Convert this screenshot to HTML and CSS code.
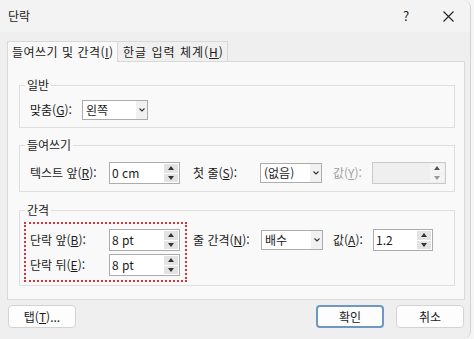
FILE: index.html
```html
<!DOCTYPE html>
<html lang="ko">
<head>
  <meta charset="UTF-8">
  <title>단락</title>
  <link rel="stylesheet" href="styles.css">
</head>
<body>
  <div class="dialog">
    <div class="titlebar">
      <span class="title">단락</span>
      <span class="help">?</span>
      <span class="close">
        <svg width="11" height="11" viewBox="0 0 11 11"><path d="M0.5 0.5 L10.5 10.5 M10.5 0.5 L0.5 10.5" stroke="#222" stroke-width="1.1" fill="none"/></svg>
      </span>
    </div>

    <div class="tabs">
      <div class="tab active">들여쓰기 및 간격(<u>I</u>)</div>
      <div class="tab">한글 입력 체계(<u>H</u>)</div>
    </div>

    <div class="panel">
      <!-- 일반 -->
      <fieldset class="group group-general">
        <legend>일반</legend>
        <div class="row">
          <span class="lbl w52">맞춤(<u>G</u>):</span>
          <div class="select w66"><span class="val">왼쪽</span><span class="chev"><svg width="6" height="4" viewBox="0 0 6 4"><path d="M0.5 0.5 L3 3 L5.5 0.5" stroke="#333" stroke-width="1.1" fill="none"/></svg></span></div>
        </div>
      </fieldset>

      <!-- 들여쓰기 -->
      <fieldset class="group group-indent">
        <legend>들여쓰기</legend>
        <div class="row">
          <span class="lbl w79">텍스트 앞(<u>R</u>):</span>
          <div class="spin w71"><span class="val">0 cm</span><span class="btns"><i class="up"></i><i class="down"></i></span></div>
          <span class="lbl w67 gap13">첫 줄(<u>S</u>):</span>
          <div class="select w62"><span class="val">(없음)</span><span class="chev"><svg width="6" height="4" viewBox="0 0 6 4"><path d="M0.5 0.5 L3 3 L5.5 0.5" stroke="#333" stroke-width="1.1" fill="none"/></svg></span></div>
          <span class="lbl w39 gap11 disabled">값(<u>Y</u>):</span>
          <div class="spin w74 disabled"><span class="val"></span><span class="btns"><i class="up"></i><i class="down"></i></span></div>
        </div>
      </fieldset>

      <!-- 간격 -->
      <fieldset class="group group-spacing">
        <legend>간격</legend>
        <div class="spacing">
          <div class="highlight">
            <div class="row">
              <span class="lbl w79">단락 앞(<u>B</u>):</span>
              <div class="spin w71"><span class="val">8 pt</span><span class="btns"><i class="up"></i><i class="down"></i></span></div>
            </div>
            <div class="row">
              <span class="lbl w79">단락 뒤(<u>E</u>):</span>
              <div class="spin w71"><span class="val">8 pt</span><span class="btns"><i class="up"></i><i class="down"></i></span></div>
            </div>
          </div>
          <div class="row line-spacing">
            <span class="lbl w68">줄 간격(<u>N</u>):</span>
            <div class="select w62"><span class="val">배수</span><span class="chev"><svg width="6" height="4" viewBox="0 0 6 4"><path d="M0.5 0.5 L3 3 L5.5 0.5" stroke="#333" stroke-width="1.1" fill="none"/></svg></span></div>
            <span class="lbl w40 gap10">값(<u>A</u>):</span>
            <div class="spin w60"><span class="val">1.2</span><span class="btns"><i class="up"></i><i class="down"></i></span></div>
          </div>
        </div>
      </fieldset>
    </div>

    <div class="footer">
      <button class="btn">탭(<u>T</u>)...</button>
      <span class="spacer"></span>
      <button class="btn default">확인</button>
      <button class="btn">취소</button>
    </div>
  </div>
</body>
</html>
```

FILE: styles.css
```css
body {
  margin: 0;
  background: #f6f6f6;
  font-family: "Noto Sans CJK KR", "Liberation Sans", sans-serif;
  font-size: 12px;
  line-height: 16px;
  color: #1b1b1b;
}
.dialog {
  width: 471px;
  height: 339px;
  box-sizing: border-box;
  background: #efefef;
  border-right: 1px solid #d2d2d2;
  border-radius: 0 8px 8px 0;
  overflow: hidden;
}
.titlebar {
  height: 32px;
  display: flex;
  align-items: center;
  padding-left: 8px;
  background: #f3f3f3;
}
.title {
  flex: 1;
}
.help {
  width: 40px;
  text-align: center;
  font-size: 13px;
}
.close {
  width: 44px;
  display: flex;
  justify-content: center;
}
.tabs {
  display: flex;
  padding: 9px 0 0 7px;
  margin-bottom: -1px;
}
.tab {
  width: 111px;
  box-sizing: border-box;
  height: 20px;
  line-height: 20px;
  padding: 0 0 0 4px;
  border: 1px solid #d9d9d9;
  border-bottom: none;
  background: #f0f0f0;
  margin-left: -1px;
  letter-spacing: 0.5px;
  white-space: nowrap;
}
.tab:first-child {
  margin-left: 0;
}
.tab + .tab {
  padding-left: 5px;
  letter-spacing: 1px;
}
.tab.active {
  position: relative;
  height: 21px;
  background: #f9f9f9;
  z-index: 1;
}
.panel {
  margin-left: 7px;
  width: 458px;
  height: 239px;
  box-sizing: border-box;
  background: #f9f9f9;
  border: 1px solid #d9d9d9;
  padding: 15px 9px 0 11px;
}
.group {
  margin: 0;
  padding: 0 8px 7px 4px;
  border: 1px solid #dfdfdf;
}
.group legend {
  padding: 0 2px;
  margin-left: 1px;
  line-height: 16px;
}
.group-general {
  padding-top: 6px;
  padding-bottom: 6px;
}
.group-indent {
  margin-top: 9px;
  padding-top: 9px;
  padding-bottom: 7px;
}
.group-spacing {
  margin-top: 10px;
  padding-top: 2px;
  padding-bottom: 3px;
}
.row {
  display: flex;
  align-items: center;
  height: 22px;
  padding-left: 6px;
}
.lbl {
  flex: none;
  white-space: nowrap;
}
.lbl.disabled {
  color: #a2a2a2;
}
.w39 { width: 39px; }
.w40 { width: 40px; }
.w52 { width: 52px; }
.w60 { width: 60px; }
.w62 { width: 62px; }
.w66 { width: 66px; }
.w67 { width: 67px; }
.w68 { width: 68px; }
.w71 { width: 71px; }
.w74 { width: 74px; }
.w79 { width: 79px; }
.gap10 { margin-left: 10px; }
.gap11 { margin-left: 11px; }
.gap13 { margin-left: 13px; }

.select {
  flex: none;
  display: flex;
  height: 20px;
  box-sizing: border-box;
  border: 1px solid #acacac;
  background: #fff;
}
.select .val {
  flex: 1;
  padding-left: 3px;
  line-height: 18px;
}
.select .chev {
  width: 11px;
  background: #f1f1f1;
  display: flex;
  align-items: center;
  justify-content: center;
}
.spin {
  flex: none;
  display: flex;
  height: 22px;
  box-sizing: border-box;
  border: 1px solid #acacac;
  background: #fff;
}
.spin .val {
  flex: 1;
  padding-left: 2px;
  line-height: 20px;
}
.spin .btns {
  width: 14px;
  padding: 1px;
  display: flex;
  flex-direction: column;
  gap: 1px;
}
.spin .btns i {
  flex: 1;
  background: #e3e3e3;
  display: flex;
  align-items: center;
  justify-content: center;
}
.spin .btns i::after {
  content: "";
  border-left: 3px solid transparent;
  border-right: 3px solid transparent;
}
.spin .up::after {
  border-bottom: 4px solid #333;
}
.spin .down::after {
  border-top: 4px solid #333;
}
.spin.disabled {
  background: #efefef;
  border-color: #cacaca;
}
.spin.disabled .btns i {
  background: #f4f4f4;
}
.spin.disabled .up::after {
  border-bottom-color: #555;
}
.spin.disabled .down::after {
  border-top-color: #999;
}

.spacing {
  display: flex;
  align-items: flex-start;
}
.highlight {
  margin-top: 2px;
  padding: 5px 5px 4px 0;
  border: 2px dotted #d8333b;
  display: flex;
  flex-direction: column;
  gap: 3px;
}
.highlight .row {
  padding-left: 4px;
}
.line-spacing {
  margin-top: 9px;
  padding-left: 6px;
}

.footer {
  display: flex;
  padding: 5px 6px 0 8px;
}
.spacer {
  flex: 1;
}
.btn {
  height: 23px;
  width: 68px;
  box-sizing: border-box;
  margin-left: 12px;
  padding: 0;
  font: inherit;
  color: #1b1b1b;
  background: #fdfdfd;
  border: 1px solid #d3d3d3;
  border-radius: 4px;
}
.btn:first-child {
  margin-left: 0;
}
.btn.default {
  border: 2px solid #6f96c4;
}
```
